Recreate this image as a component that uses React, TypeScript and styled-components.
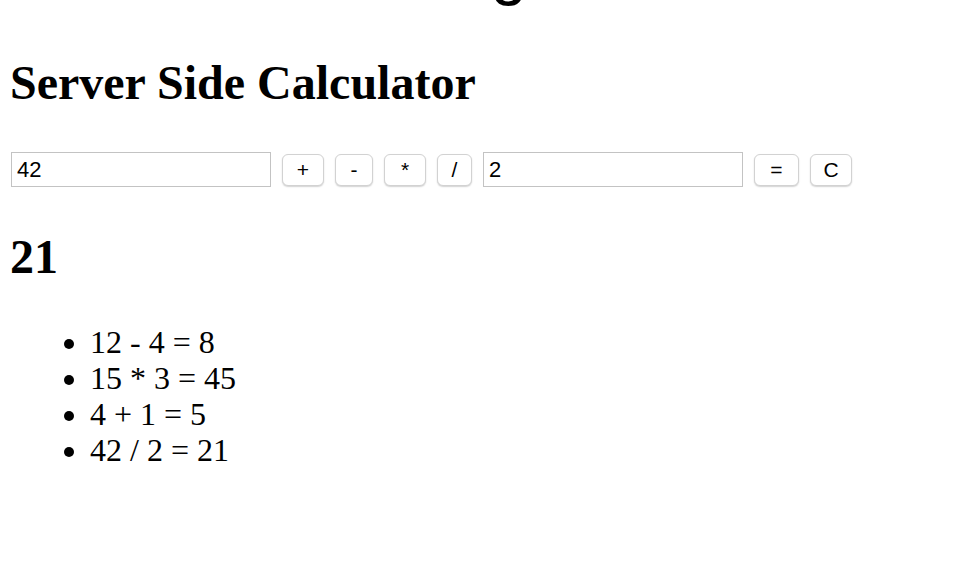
import styled, { createGlobalStyle } from 'styled-components';

const GlobalStyle = createGlobalStyle`
    html, body {
        margin: 0;
        padding: 0;
        background: #ffffff;
        overflow: hidden;
    }

    body {
        font-family: 'Liberation Serif', 'Times New Roman', serif;
        color: #000000;
    }
`;

const Page = styled.main`
    padding: 0 10px;
`;

// only the bottom of this heading is left in view, the page is scrolled past it
const Banner = styled.h1`
    margin: -69px 0 0;
    font-family: 'Liberation Sans', Arial, sans-serif;
    font-size: 66px;
    font-weight: 400;
    line-height: 76px;
    white-space: nowrap;
`;

const Title = styled.h2`
    margin: 48px 0 42px;
    font-size: 48px;
    font-weight: 700;
    line-height: 55px;
`;

const CalcRow = styled.form`
    display: flex;
    align-items: center;
    gap: 11px;
    height: 35px;
    padding-left: 1px;
`;

const NumberInput = styled.input`
    box-sizing: border-box;
    width: 260px;
    height: 35px;
    margin: 0;
    padding: 0 5px;
    border: 1px solid #c3c3c3;
    border-radius: 0;
    background: #ffffff;
    font-family: 'Liberation Sans', Arial, sans-serif;
    font-size: 22px;
    color: #000000;
    outline: none;
`;

const OpButton = styled.button<{ $width: number }>`
    box-sizing: border-box;
    width: ${(p) => p.$width}px;
    height: 32px;
    margin: 0;
    padding: 0;
    border: 1px solid #d2d2d2;
    border-radius: 6px;
    background: #ffffff;
    box-shadow: 0 1px 1.5px rgba(0, 0, 0, 0.18);
    font-family: 'Liberation Sans', Arial, sans-serif;
    font-size: 21px;
    line-height: 1;
    color: #000000;
    cursor: pointer;
`;

const Result = styled.h2`
    margin: 42px 0 40px;
    font-size: 48px;
    font-weight: 700;
    line-height: 55px;
`;

const History = styled.ul`
    margin: 0;
    padding-left: 80px;
    font-size: 32px;
    line-height: 36px;
`;

const HistoryItem = styled.li``;

const OPERATORS = [
    { label: '+', width: 42 },
    { label: '-', width: 38 },
    { label: '*', width: 42 },
    { label: '/', width: 35 },
];

const HISTORY = ['12 - 4 = 8', '15 * 3 = 45', '4 + 1 = 5', '42 / 2 = 21'];

export default function App() {
    return (
        <>
            <GlobalStyle />
            <Page>
                <Banner>Server Rendering</Banner>
                <Title>Server Side Calculator</Title>
                <CalcRow onSubmit={(e) => e.preventDefault()}>
                    <NumberInput type="text" defaultValue="42" />
                    {OPERATORS.map((op) => (
                        <OpButton key={op.label} type="button" $width={op.width}>
                            {op.label}
                        </OpButton>
                    ))}
                    <NumberInput type="text" defaultValue="2" />
                    <OpButton type="submit" $width={45}>
                        =
                    </OpButton>
                    <OpButton type="button" $width={42}>
                        C
                    </OpButton>
                </CalcRow>
                <Result>21</Result>
                <History>
                    {HISTORY.map((line) => (
                        <HistoryItem key={line}>{line}</HistoryItem>
                    ))}
                </History>
            </Page>
        </>
    );
}
